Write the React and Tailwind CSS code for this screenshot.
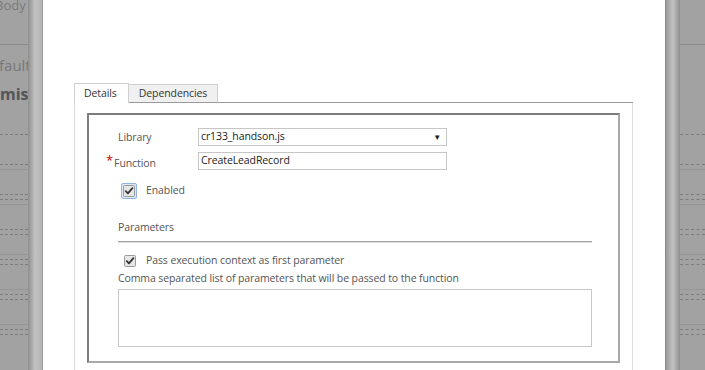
const font = "font-['Open_Sans','Noto_Sans',sans-serif]";

const CheckBox = ({ focused }) => (
  <span
    className={`flex items-center justify-center ${
      focused ? "w-[16px] h-[16px] rounded-[2px] border border-[#8fb4e6] bg-[#dce8f8]" : "w-[13px] h-[13px]"
    }`}
  >
    <svg width="12" height="12" viewBox="0 0 12 12">
      <rect x="0.5" y="0.5" width="11" height="11" rx="1" fill="#e6e6e6" stroke="#9a9a9a" />
      <path d="M2.8 6.2 L4.9 8.4 L9.4 3.2" fill="none" stroke="#333" strokeWidth="1.8" strokeLinecap="round" strokeLinejoin="round" />
    </svg>
  </span>
);

const StripRows = () => (
  <div className="flex flex-col">
    <div className="h-[45px] border-b border-[#8a8a8a]" />
    <div className="h-[90px] border-b border-dashed border-[#7d7d7d]" />
    <div className="h-[30px] border-b border-dashed border-[#7d7d7d]" />
    <div className="h-[5px] border-b border-[#969696]" />
    <div className="h-[25px] border-b border-dashed border-[#7d7d7d]" />
    <div className="h-[5px] border-b border-dashed border-[#7d7d7d]" />
    <div className="h-[5px] border-b border-[#969696]" />
    <div className="h-[25px] border-b border-dashed border-[#7d7d7d]" />
    <div className="h-[5px] border-b border-dashed border-[#7d7d7d]" />
    <div className="h-[20px] border-b border-[#969696]" />
    <div className="h-[5px] border-b border-dashed border-[#7d7d7d]" />
    <div className="h-[5px] border-b border-dashed border-[#7d7d7d]" />
    <div className="h-[25px] border-b border-[#969696]" />
    <div className="h-[5px] border-b border-dashed border-[#7d7d7d]" />
    <div className="h-[5px] border-b border-dashed border-[#7d7d7d]" />
    <div className="h-[25px] border-b border-[#969696]" />
    <div className="h-[5px] border-b border-dashed border-[#7d7d7d]" />
    <div className="h-[5px] border-b border-dashed border-[#7d7d7d]" />
  </div>
);

export default function App() {
  return (
    <div className={`w-[705px] h-[370px] overflow-hidden flex bg-[#a2a2a2] ${font}`}>
      {/* page behind the overlay, left side */}
      <div className="relative w-[28px] shrink-0 overflow-hidden">
        <StripRows />
        <div className="absolute top-0 left-0 w-[28px] overflow-hidden">
          <div className="-mt-[4px] -ml-[5px] whitespace-nowrap text-[13px] text-[#7a7a7a]">Body</div>
          <div className="mt-[38px] -ml-[1px] whitespace-nowrap text-[15px] text-[#777]">fault</div>
          <div className="mt-[6px] whitespace-nowrap text-[16px] font-bold text-[#555]">mis</div>
        </div>
      </div>
      <div className="w-[15px] shrink-0 bg-gradient-to-r from-[#8e8e8e] via-[#c2c2c2] to-[#b5b5b5] border-r border-[#9c9c9c]" />

      {/* dialog */}
      <div className="w-[622px] shrink-0 bg-white pt-[83px] pl-[31px] pr-[32px] text-[10.5px] tracking-[-0.1px] text-[#444]">
        {/* tabs */}
        <div className="flex items-end h-[20px]">
          <div className="h-[20px] w-[55px] border border-b-0 border-[#cfcfcf] bg-white flex items-center pl-[9px] text-[#333]">
            Details
          </div>
          <div className="h-[19px] w-[89px] border border-l-0 border-[#cfcfcf] border-b-[#9a9a9a] bg-[#f0f0f0] flex items-center justify-center text-[#333]">
            Dependencies
          </div>
          <div className="flex-1 h-[1px] bg-[#9a9a9a]" />
        </div>

        {/* tab panel */}
        <div className="border-l border-r border-[#dcdcdc] pt-[10px] px-[12px] h-[300px]">
          <div className="h-[250px] border-2 border-[#7c7c7c] border-r-[#a8a8a8] border-b-[#a8a8a8] pl-[29px] pr-[26px] pt-[13px]">
            {/* library */}
            <div className="flex items-center h-[18px]">
              <div className="w-[80px] text-[#555] mt-[1px]">Library</div>
              <div className="w-[249px] h-[18px] border border-[#c6c6c6] flex items-center justify-between pl-[2px] pr-[5px] text-[#222]">
                <span>cr133_handson.js</span>
                <span className="text-[8px] text-[#222]">▼</span>
              </div>
            </div>
            {/* function */}
            <div className="flex items-center h-[18px] mt-[6px]">
              <div className="w-[80px] h-[18px] flex items-start -ml-[12px]">
                <span className="text-[#c00] text-[13px] leading-none mr-[1px] mt-[2px]">*</span>
                <span className="text-[#555] mt-[4px]">Function</span>
              </div>
              <div className="ml-[12px] w-[249px] h-[18px] border border-[#c6c6c6] flex items-center pl-[2px] text-[#222]">
                CreateLeadRecord
              </div>
            </div>
            {/* enabled */}
            <div className="flex items-center mt-[13px] ml-[3px] gap-[9px]">
              <CheckBox focused />
              <span className="text-[#555]">Enabled</span>
            </div>

            {/* parameters */}
            <div className="mt-[21px] text-[#555]">Parameters</div>
            <div className="mt-[5px] h-[2px] bg-[#a6a6a6] border-b border-[#dcdcdc]" />
            <div className="flex items-center mt-[10px] ml-[5px] gap-[10px]">
              <CheckBox />
              <span className="text-[#555]">Pass execution context as first parameter</span>
            </div>
            <div className="mt-[2px] text-[#555]">Comma separated list of parameters that will be passed to the function</div>
            <div className="mt-[3px] h-[58px] border border-[#c8c8c8]" />
          </div>
        </div>
      </div>

      {/* page behind the overlay, right side */}
      <div className="w-[15px] shrink-0 bg-gradient-to-r from-[#9c9c9c] via-[#c2c2c2] to-[#8e8e8e] border-l border-[#888]" />
      <div className="flex-1 overflow-hidden">
        <StripRows />
      </div>
    </div>
  );
}
